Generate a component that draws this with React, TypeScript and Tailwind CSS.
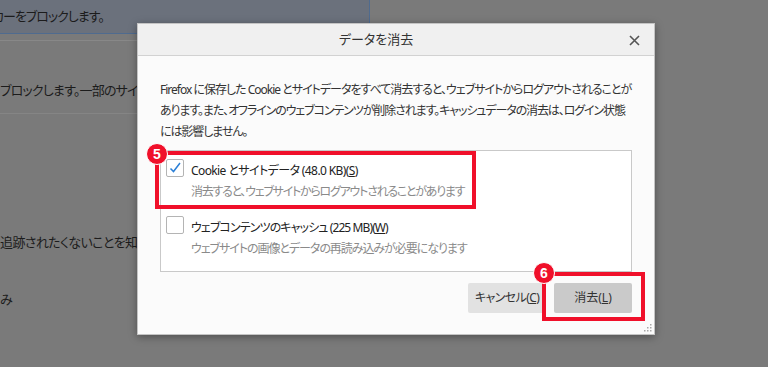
import React from 'react';

const jp = "[font-family:'Noto_Sans','Noto_Sans_CJK_JP',sans-serif] [font-feature-settings:'palt']";

const Check = ({ checked }: { checked?: boolean }) => (
  <div className="w-[18px] h-[18px] shrink-0 rounded-[2px] border border-[#b4b4b4] bg-white flex items-center justify-center">
    {checked && (
      <svg width="14" height="14" viewBox="0 0 14 14">
        <path d="M2.5 7.5 L5.5 10.5 L12 2" fill="none" stroke="#2b7fd6" strokeWidth="1.5" />
      </svg>
    )}
  </div>
);

const Badge = ({ n, className }: { n: string; className: string }) => (
  <div className={`absolute w-[22px] h-[22px] rounded-full bg-[#f0102a] border border-white text-white text-[14px] font-bold leading-none flex items-center justify-center [font-family:'Liberation_Sans',sans-serif] ${className}`}>
    {n}
  </div>
);

export default function App() {
  return (
    <div className={`relative w-[768px] h-[367px] overflow-hidden bg-[#7a7a7a] ${jp}`}>
      {/* dimmed page behind the dialog */}
      <div className="w-[370px] text-[13px] text-[#1c1c1c] whitespace-nowrap">
        <div className="h-[34px] bg-[#6b717c] border-b border-r border-[#4f6b8f] flex items-center overflow-hidden">
          <span className="-ml-[8px] tracking-[-1px]">カーをブロックします。</span>
        </div>
        <div className="mt-[6px] border-t border-[#888888]" />
        <div className="mt-[39px] w-[137px] h-[20px] leading-[20px] overflow-hidden tracking-[-0.8px]">ブロックします。一部のサイトが正しく動作しない可能性があります。</div>
        <div className="mt-[13px] border-t border-[#858585]" />
        <div className="mt-[118px] w-[137px] h-[20px] leading-[20px] overflow-hidden tracking-[-0.6px]">追跡されたくないことを知らせる &quot;Do Not Track&quot; 信号を送信します</div>
        <div className="mt-[37px] h-[20px] leading-[20px]">み</div>
      </div>

      {/* dialog */}
      <div className="absolute left-[137px] top-[23px] w-[518px] h-[312px] bg-[#fbfbfb] border border-[#c4c4c4] shadow-[0_2px_8px_rgba(0,0,0,0.35)] flex flex-col">
        <div className="relative h-[32px] shrink-0 bg-[#f0f0f0] border-b border-[#d2d2d2] flex items-center justify-center pr-[40px] text-[13px] text-[#333]">
          データを消去
          <svg className="absolute right-[14px] top-[11px]" width="11" height="11" viewBox="0 0 11 11">
            <path d="M1 1 L10 10 M10 1 L1 10" stroke="#555" strokeWidth="1.6" />
          </svg>
        </div>
        <div className="flex-1 flex flex-col px-[22px] pt-[23px] pb-[21px]">
          <div className="text-[12px] leading-[21px] text-[#333] whitespace-nowrap">
            <div className="tracking-[-1px]">Firefox に保存した Cookie とサイトデータをすべて消去すると、ウェブサイトからログアウトされることが</div>
            <div className="tracking-[-1.1px]">あります。また、オフラインのウェブコンテンツが削除されます。キャッシュデータの消去は、ログイン状態</div>
            <div className="tracking-[-1.1px]">には影響しません。</div>
          </div>
          <div className="mt-[8px] h-[122px] border border-[#c9c9c9] bg-white pl-[5px] pt-[8px] flex flex-col gap-[14px]">
            <div className="flex gap-[7px]">
              <Check checked />
              <div className="pt-[1px] text-[12px] leading-[21px] whitespace-nowrap">
                <div className="text-[#222] tracking-[-0.6px]">Cookie とサイトデータ (48.0 KB)(<span className="underline">S</span>)</div>
                <div className="text-[#8a8a8a] tracking-[-1.25px]">消去すると、ウェブサイトからログアウトされることがあります</div>
              </div>
            </div>
            <div className="flex gap-[7px]">
              <Check />
              <div className="pt-[1px] text-[12px] leading-[21px] whitespace-nowrap">
                <div className="text-[#222] tracking-[-0.9px]">ウェブコンテンツのキャッシュ (225 MB)(<span className="underline">W</span>)</div>
                <div className="text-[#8a8a8a] tracking-[-1.05px]">ウェブサイトの画像とデータの再読み込みが必要になります</div>
              </div>
            </div>
          </div>
          <div className="mt-auto flex justify-end gap-[8px]">
            <button className="w-[78px] h-[30px] rounded-[2px] bg-[#e2e2e2] text-[12px] text-[#333] tracking-[-0.6px]">
              キャンセル(<span className="underline">C</span>)
            </button>
            <button className="w-[78px] h-[30px] rounded-[2px] bg-[#cacaca] text-[12px] text-[#333]">
              消去(<span className="underline">L</span>)
            </button>
          </div>
        </div>
        <svg className="absolute right-[2px] bottom-[2px]" width="8" height="8" viewBox="0 0 8 8">
          <g fill="#a8a8a8">
            <rect x="6" y="0" width="1.5" height="1.5" />
            <rect x="3" y="3" width="1.5" height="1.5" />
            <rect x="6" y="3" width="1.5" height="1.5" />
            <rect x="0" y="6" width="1.5" height="1.5" />
            <rect x="3" y="6" width="1.5" height="1.5" />
            <rect x="6" y="6" width="1.5" height="1.5" />
          </g>
        </svg>
      </div>

      {/* annotations */}
      <div className="absolute left-[155px] top-[151px] w-[321px] h-[58px] border-[4px] border-[#f0102a]" />
      <Badge n="5" className="left-[146px] top-[143px]" />
      <div className="absolute left-[542px] top-[272px] w-[103px] h-[49px] border-[4px] border-[#f0102a]" />
      <Badge n="6" className="left-[533px] top-[262px]" />
    </div>
  );
}
